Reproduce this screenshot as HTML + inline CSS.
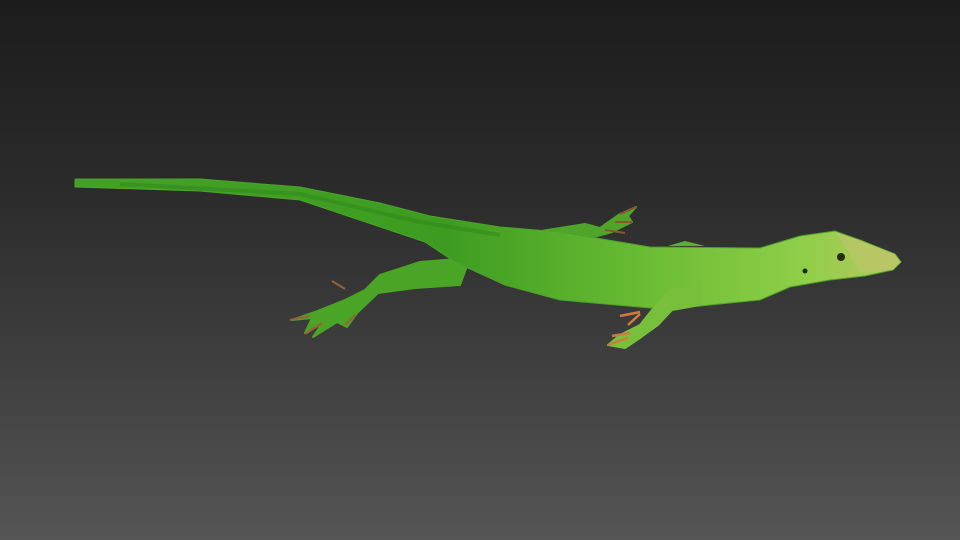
<!DOCTYPE html>
<html><head><style>
html,body{margin:0;padding:0}
body{width:960px;height:540px;overflow:hidden;background:linear-gradient(#1c1c1c 0%,#2b2b2b 35%,#444 75%,#555 100%)}
svg{position:absolute;left:0;top:0}
</style></head><body>
<svg width="960" height="540" viewBox="0 0 960 540">
<defs>
<linearGradient id="g" x1="0" y1="0" x2="1" y2="0">
<stop offset="0" stop-color="#45a028"/><stop offset="0.45" stop-color="#3d9c20"/><stop offset="0.7" stop-color="#6cbd34"/><stop offset="0.88" stop-color="#8fce48"/><stop offset="1" stop-color="#b8c862"/>
</linearGradient>
</defs>
<g stroke-linejoin="round">
<!-- upper hind leg -->
<path d="M535 232 L585 224 L600 228 L620 214 L636 207 L628 216 L632 222 L612 232 L590 238 Z" fill="#4fa52a" stroke="#4fa52a" stroke-width="2"/>
<path d="M620 214 L636 207 M615 222 L632 222 M605 230 L625 233" stroke="#8a5530" stroke-width="2"/>
<!-- lower hind leg -->
<path d="M470 258 L420 262 L380 275 L365 290 L345 300 L315 312 L292 320 L312 318 L305 333 L322 324 L313 337 L337 322 L347 327 L357 313 L378 293 L415 288 L460 285 Z" fill="#4aa426" stroke="#4aa426" stroke-width="2"/>
<path d="M290 320 L310 316 M305 334 L322 323 M332 281 L345 289 M345 325 L355 315" stroke="#9a6038" stroke-width="2"/>
<!-- body and tail -->
<path d="M75 179 L200 179 L300 187 L380 203 L430 216 L500 227 L560 232 L650 247 L760 248 L800 236 L835 231 L860 240 L895 254 L901 262 L893 270 L865 276 L830 280 L790 287 L760 300 L700 306 L650 308 L560 300 L505 285 L455 262 L425 242 L300 200 L200 191 L75 187 Z" fill="url(#g)" stroke="#4aa428" stroke-width="1"/>
<path d="M120 184 L300 194 L420 222 L500 235" stroke="#2f8218" stroke-width="4" fill="none" opacity="0.45"/>
<!-- front leg -->
<path d="M700 286 L670 290 L652 310 L640 325 L620 335 L608 345 L625 348 L640 338 L658 325 L672 310 L700 305 Z" fill="#78c03c" stroke="#78c03c" stroke-width="2"/>
<path d="M608 345 L628 338 M612 336 L630 333 M620 316 L640 312 M628 325 L640 314" stroke="#d07a40" stroke-width="2.5"/>
<path d="M668 246 L685 241 L705 246 Z" fill="#5faf2e"/>
<path d="M835 232 L860 240 L895 254 L901 262 L893 270 L860 272 L850 255 Z" fill="#c0c46a" opacity="0.6"/>
</g>
<circle cx="841" cy="257" r="4" fill="#2a2a10"/>
<circle cx="805" cy="271" r="2.5" fill="#1a2a0a"/>
</svg>
</body></html>
